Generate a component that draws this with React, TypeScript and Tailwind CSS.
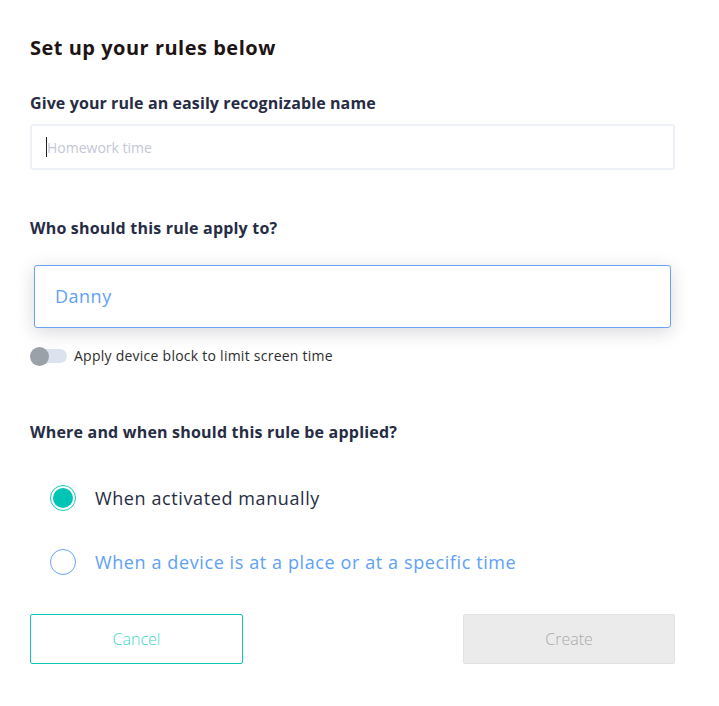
import { useState } from "react";

const font = { fontFamily: "'Open Sans', 'Noto Sans', sans-serif" };

const App = () => {
  const [mode, setMode] = useState<"manual" | "auto">("manual");
  const [block, setBlock] = useState(false);

  return (
    <div className="min-h-screen bg-white" style={font}>
      <div className="px-[30px] pt-[34px] w-[705px]">
        <h1 className="text-[20px] font-bold leading-[28px] tracking-[0.5px] text-[#1f1414]">Set up your rules below</h1>

        <label className="block mt-[30px] text-[16px] font-bold leading-[22px] tracking-[0.1px] text-[#262c44]">
          Give your rule an easily recognizable name
        </label>
        <div className="mt-[10px] h-[46px] border-2 border-[#eef1f7] rounded-[3px] flex items-center pl-[14px]">
          <span className="w-px h-[20px] bg-[#222]" />
          <span className="text-[14px] text-[#c3c6d8]">Homework time</span>
        </div>

        <h2 className="mt-[47px] text-[16px] font-bold leading-[22px] tracking-[0.2px] text-[#262c44]">Who should this rule apply to?</h2>
        <div className="mt-[26px] mx-[4px] h-[63px] border border-[#6aa3f5] rounded-[3px] bg-white shadow-[0_4px_18px_rgba(40,40,70,0.18)] flex items-center pl-[20px]">
          <span className="text-[18px] tracking-[0.5px] text-[#5ea1f7]">Danny</span>
        </div>

        <button onClick={() => setBlock(!block)} className="mt-[17px] flex items-center gap-[7px]">
          <span className="relative w-[37px] h-[20px] flex items-center">
            <span className="w-[36px] h-[14px] rounded-full bg-[#dde3ee] ml-[1px]" />
            <span className="absolute left-0 top-[1px] w-[19px] h-[19px] rounded-full bg-[#9aa1a9]" />
          </span>
          <span className="text-[14px] tracking-[0.25px] text-[#2d2d2d]">Apply device block to limit screen time</span>
        </button>

        <h2 className="mt-[55px] text-[16px] font-bold leading-[22px] tracking-[0.2px] text-[#262c44]">Where and when should this rule be applied?</h2>

        <div className="mt-[42px] flex flex-col gap-[38px] pl-[20px]">
          <button onClick={() => setMode("manual")} className="flex items-center gap-[19px] text-left">
            <span className="w-[26px] h-[26px] rounded-full border border-[#1ac7b8] flex items-center justify-center">
              <span className="w-[20px] h-[20px] rounded-full bg-[#00c4b4]" />
            </span>
            <span className="text-[18px] leading-[26px] tracking-[0.6px] text-[#262c44]">When activated manually</span>
          </button>
          <button onClick={() => setMode("auto")} className="flex items-center gap-[19px] text-left">
            <span className="w-[26px] h-[26px] rounded-full border border-[#6aa3f5]" />
            <span className="text-[18px] leading-[26px] tracking-[0.6px] text-[#5ea1f7]">When a device is at a place or at a specific time</span>
          </button>
        </div>

        <div className="mt-[39px] flex justify-between">
          <button className="w-[213px] h-[50px] border border-[#10c4b5] rounded-[2px] text-[16px] font-light text-[#3fd8cb]">
            Cancel
          </button>
          <button className="w-[212px] h-[50px] border border-[#e2e2e2] bg-[#ebebeb] rounded-[2px] text-[16px] font-light text-[#aaaaaa]">
            Create
          </button>
        </div>
      </div>
      <span className="hidden">{mode}</span>
    </div>
  );
};

export default App;
